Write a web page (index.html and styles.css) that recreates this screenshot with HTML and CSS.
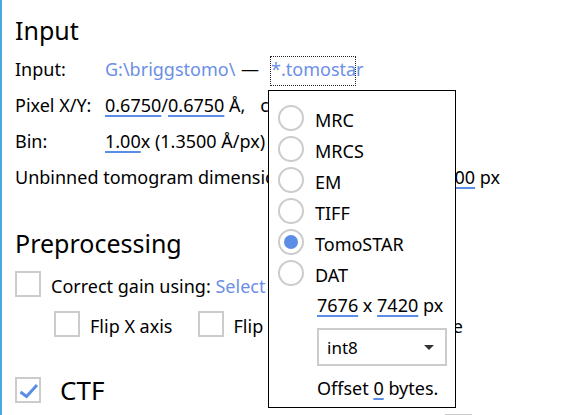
FILE: index.html
```html
<!DOCTYPE html>
<html>
<head>
<meta charset="utf-8">
<link rel="stylesheet" href="styles.css">
</head>
<body>
<div class="page">
  <h1 class="section-title first">Input</h1>
  <div class="row">
    <span class="label">Input:</span>
    <span class="link">G:\briggstomo\</span><span class="dash">&nbsp;—</span><span class="filter link">*.tomostar</span>
  </div>
  <div class="row">
    <span class="label">Pixel X/Y:</span>
    <span class="num">0.6750</span>/<span class="num">0.6750</span>&nbsp;Å,<span class="after">cropped</span>
  </div>
  <div class="row">
    <span class="label">Bin:</span>
    <span class="num">1.00</span>x (1.3500 Å/px)
  </div>
  <div class="row dims">
    <span>Unbinned tomogram dimensions:</span>
    <span><span class="num">7676</span> x <span class="num">7420</span> x <span class="num">2000</span> px</span>
  </div>

  <h1 class="section-title second">Preprocessing</h1>
  <div class="check-row">
    <span class="box"></span>
    <span class="check-label">Correct gain using: <span class="link">Select gain reference</span></span>
  </div>
  <div class="check-row sub">
    <span class="check-group"><span class="box"></span><span class="check-label">Flip X axis</span></span>
    <span class="check-group"><span class="box"></span><span class="check-label">Flip Y axis</span></span>
    <span class="check-group last"><span class="box"></span><span class="check-label">Transpose</span></span>
  </div>

  <div class="check-row ctf">
    <span class="box checked">
      <svg width="26" height="26" viewBox="0 0 26 26"><path d="M5.5 15 L11.5 19.5 L22 8" fill="none" stroke="#5b8de6" stroke-width="3" stroke-linejoin="miter"/></svg>
    </span>
    <span class="ctf-title">CTF</span>
  </div>
  <div class="next-row"><span class="small-box"></span></div>
</div>

<div class="popup">
  <div class="radio-row"><span class="radio"></span><span class="radio-label">MRC</span></div>
  <div class="radio-row"><span class="radio"></span><span class="radio-label">MRCS</span></div>
  <div class="radio-row"><span class="radio"></span><span class="radio-label">EM</span></div>
  <div class="radio-row"><span class="radio"></span><span class="radio-label">TIFF</span></div>
  <div class="radio-row"><span class="radio on"></span><span class="radio-label">TomoSTAR</span></div>
  <div class="radio-row"><span class="radio"></span><span class="radio-label">DAT</span></div>
  <div class="dat-opts">
    <div class="size-row"><span class="num">7676</span> x <span class="num">7420</span> px</div>
    <div class="select"><span>int8</span><span class="arrow"></span></div>
    <div class="offset-row">Offset <span class="num">0</span> bytes.</div>
  </div>
</div>
</body>
</html>
```

FILE: styles.css
```css
html, body {
  margin: 0;
  padding: 0;
  background: #ffffff;
}
body {
  font-family: "Noto Sans", "Open Sans", sans-serif;
  font-size: 18px;
  color: #000;
  border-left: 2px solid #4ba7df;
  height: 415px;
  box-sizing: border-box;
  overflow: hidden;
  position: relative;
}
.page {
  padding-left: 13px;
  padding-top: 12px;
}
.section-title {
  font-size: 25px;
  font-weight: 400;
  line-height: 36px;
  margin: 0;
}
.first {
  margin-bottom: 3px;
}
.section-title.second {
  margin-top: 30px;
}
.row {
  height: 36px;
  line-height: 36px;
  white-space: nowrap;
  display: flex;
  align-items: baseline;
}
.label {
  display: inline-block;
  width: 90px;
}
.link {
  color: #6b8fe6;
}
.dash {
  letter-spacing: 1px;
}
.filter {
  outline: 1px dotted #222;
  line-height: normal;
  display: inline-block;
  padding: 0 0 4px 0;
  margin-left: 11px;
  width: 84px;
  box-sizing: border-box;
  white-space: nowrap;
}
.after {
  margin-left: 15px;
}
.num {
  text-decoration: underline;
  text-decoration-color: #5b8de6;
  text-decoration-thickness: 2px;
  text-underline-offset: 3px;
}
.dims {
  width: 485px;
  justify-content: space-between;
}
.check-row {
  display: flex;
  align-items: flex-start;
  height: 26px;
  margin-top: 10px;
}
.check-row.sub {
  margin-top: 14px;
  padding-left: 39px;
  width: 409px;
}
.check-group {
  display: flex;
  align-items: flex-start;
}
.check-group + .check-group {
  margin-left: 25px;
}
.check-group.last {
  margin-left: auto;
}
.box {
  width: 22px;
  height: 22px;
  border: 2px solid #cccccc;
  flex: none;
  position: relative;
}
.box svg {
  position: absolute;
  left: -2px;
  top: -2px;
}
.check-label {
  margin-left: 10px;
  line-height: 26px;
  padding-top: 2px;
  white-space: nowrap;
}
.check-row.ctf {
  margin-top: 40px;
}
.ctf-title {
  font-size: 26px;
  line-height: 26px;
  margin-left: 19px;
}
.next-row {
  margin-top: 11px;
  padding-left: 430px;
}
.small-box {
  display: block;
  width: 23px;
  height: 23px;
  border: 2px solid #cccccc;
}
.popup {
  position: absolute;
  left: 266px;
  top: 90px;
  width: 188px;
  height: 318px;
  border: 1px solid #000;
  background: #fff;
  padding-top: 11px;
  box-sizing: border-box;
}
.radio-row {
  display: flex;
  align-items: center;
  height: 31px;
  padding-left: 9px;
}
.radio {
  width: 22px;
  height: 22px;
  border: 2px solid #cccccc;
  border-radius: 50%;
  margin-right: 11px;
  position: relative;
  flex: none;
}
.radio.on::after {
  content: "";
  position: absolute;
  left: 4px;
  top: 4px;
  width: 14px;
  height: 14px;
  border-radius: 50%;
  background: #5b8de6;
}
.radio-label {
  padding-top: 5px;
}
.dat-opts {
  padding-left: 48px;
}
.size-row {
  height: 34px;
  line-height: 34px;
}
.select {
  display: flex;
  align-items: center;
  justify-content: space-between;
  padding: 0 11px 0 8px;
  box-sizing: border-box;
  width: 130px;
  height: 38px;
  margin-top: 6px;
  border: 2px solid #cccccc;
  font-size: 17px;
}
.arrow {
  width: 0;
  height: 0;
  border-left: 5.5px solid transparent;
  border-right: 5.5px solid transparent;
  border-top: 5px solid #333;
}
.offset-row {
  height: 44px;
  line-height: 44px;
}
```
